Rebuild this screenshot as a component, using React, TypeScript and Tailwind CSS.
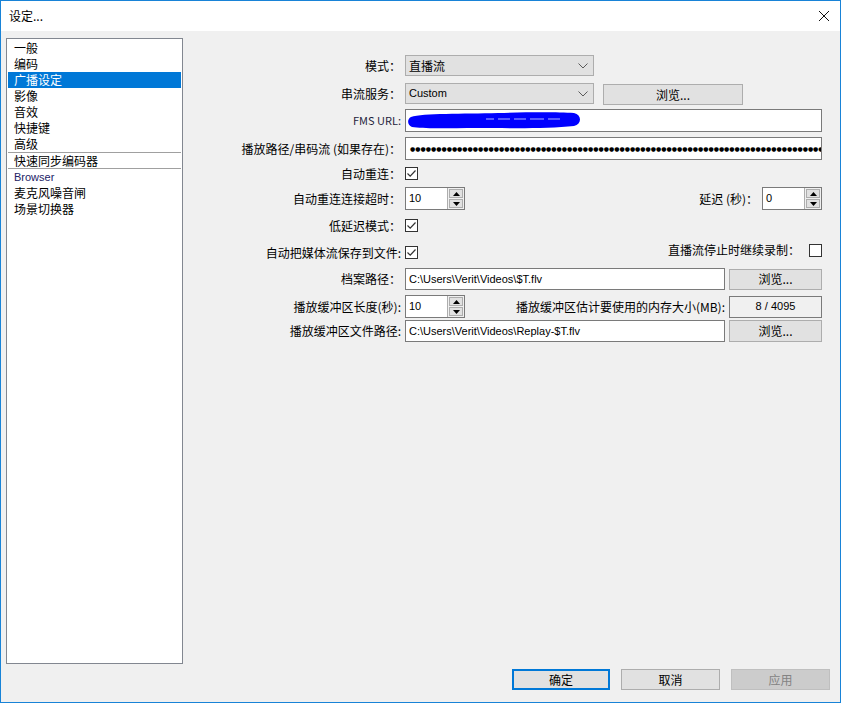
import React from 'react';

const font = { fontFamily: '"Noto Sans CJK SC", "Liberation Sans", sans-serif' };
const latin = { fontFamily: '"Liberation Sans", "Noto Sans CJK SC", sans-serif' };

const navItems = ['一般', '编码', '广播设定', '影像', '音效', '快捷键', '高级'];

const Check = ({ checked }: { checked: boolean }) => (
  <div className="w-[13px] h-[13px] shrink-0 border border-[#333333] bg-white flex items-center justify-center">
    {checked && (
      <svg width="11" height="11" viewBox="0 0 11 11">
        <path d="M1.5 5.5 L4.2 8.2 L9.5 2.5" fill="none" stroke="#333333" strokeWidth="1.2" />
      </svg>
    )}
  </div>
);

const Chevron = () => (
  <svg width="10" height="6" viewBox="0 0 10 6" className="mr-[5px]">
    <path d="M0.5 0.5 L5 5 L9.5 0.5" fill="none" stroke="#5a5a5a" strokeWidth="1" />
  </svg>
);

const Combo = ({ value, isLatin }: { value: string; isLatin?: boolean }) => (
  <div className="w-[189px] h-[21px] shrink-0 bg-[#e1e1e1] border border-[#adadad] flex items-center justify-between pl-[3px]">
    <span className={isLatin ? 'text-[11px] text-black' : 'text-[12px] text-black'} style={isLatin ? latin : font}>
      {value}
    </span>
    <Chevron />
  </div>
);

const Btn = ({ label, w, h = 'h-[21px]' }: { label: string; w: string; h?: string }) => (
  <div className={`${w} ${h} shrink-0 bg-[#e1e1e1] border border-[#adadad] flex items-center justify-center text-[12px] text-black`}>
    {label}
  </div>
);

const SpinBox = ({ value }: { value: string }) => (
  <div className="w-[60px] h-[23px] shrink-0 flex bg-white border border-[#7a7a7a]">
    <div className="flex-1 pl-[3px] pt-[3px] text-[11px] text-black leading-[14px]" style={latin}>
      {value}
    </div>
    <div className="w-[17px] flex flex-col gap-px p-px bg-[#f0f0f0] border-l border-[#adadad]">
      <div className="flex-1 bg-[#e1e1e1] border border-[#adadad] flex items-center justify-center">
        <svg width="7" height="4" viewBox="0 0 7 4">
          <path d="M0 4 L3.5 0 L7 4 Z" fill="#000" />
        </svg>
      </div>
      <div className="flex-1 bg-[#e1e1e1] border border-[#adadad] flex items-center justify-center">
        <svg width="7" height="4" viewBox="0 0 7 4">
          <path d="M0 0 L3.5 4 L7 0 Z" fill="#000" />
        </svg>
      </div>
    </div>
  </div>
);

const TextBox = ({ value, w }: { value: string; w: string }) => (
  <div className={`${w} h-[22px] shrink-0 bg-white border border-[#7a7a7a] flex items-center pl-[3px] text-[11px] text-black`} style={latin}>
    {value}
  </div>
);

const Row = ({ label, top, h, children, labelStyle }: { label: string; top: string; h: string; children: React.ReactNode; labelStyle?: string }) => (
  <div className={`flex items-center ${top} ${h}`}>
    <div className={`w-[222px] shrink-0 pr-[4px] text-right whitespace-nowrap ${labelStyle ?? 'text-[12px] text-black'}`}>{label}</div>
    {children}
  </div>
);

export default function App() {
  return (
    <div className="w-[841px] h-[703px] border border-[#1883d7] bg-[#f0f0f0] flex flex-col overflow-hidden" style={font}>
      {/* title bar */}
      <div className="h-[30px] shrink-0 bg-white flex items-center justify-between pl-[8px] pr-[10px]">
        <span className="text-[12px] text-black">设定...</span>
        <svg width="12" height="12" viewBox="0 0 12 12">
          <path d="M1 1 L11 11 M11 1 L1 11" stroke="#111" strokeWidth="1" />
        </svg>
      </div>

      <div className="flex-1 flex flex-col pl-[5px] pt-[7px]">
        <div className="flex h-[626px]">
          {/* nav list */}
          <div className="w-[177px] shrink-0 h-full border border-[#828790] bg-white pt-px px-px">
            {navItems.map((item) => (
              <div
                key={item}
                className={`h-[16px] flex items-center pl-[6px] text-[12px] whitespace-nowrap ${item === '广播设定' ? 'bg-[#0078d7] text-white' : 'text-black'}`}
              >
                {item}
              </div>
            ))}
            <div className="h-px bg-[#a0a0a0]" />
            <div className="h-[15px] flex items-center pl-[6px] text-[12px] text-black whitespace-nowrap">快速同步编码器</div>
            <div className="h-px bg-[#a0a0a0]" />
            <div className="h-[16px] flex items-center pl-[6px] text-[11px] text-[#222266]" style={latin}>
              Browser
            </div>
            <div className="h-[16px] flex items-center pl-[6px] text-[12px] text-black whitespace-nowrap">麦克风噪音闸</div>
            <div className="h-[16px] flex items-center pl-[6px] text-[12px] text-black whitespace-nowrap">场景切换器</div>
          </div>

          {/* settings */}
          <div className="flex-1 min-w-0 flex flex-col pt-[17px] pr-[18px]">
            <Row label="模式：" top="" h="h-[21px]">
              <Combo value="直播流" />
            </Row>
            <Row label="串流服务：" top="mt-[7px]" h="h-[21px]">
              <Combo value="Custom" isLatin />
              <div className="ml-[9px] mt-[2px]">
                <Btn label="浏览..." w="w-[140px]" />
              </div>
            </Row>
            <Row label="FMS URL:" top="mt-[5px]" h="h-[23px]" labelStyle="text-[11px] text-[#1e1e3c]">
              <div className="flex-1 min-w-0 h-[23px] bg-white border border-[#7a7a7a] flex items-center pl-[2px]">
                <svg width="174" height="19" viewBox="0 0 174 19">
                  <path
                    d="M3 6 C15 2 55 3 90 2 C122 1 150 1 166 2 C174 4 174 13 166 15 C140 18 100 17 70 17 C40 17 15 18 4 16 C-1 14 -1 8 3 6 Z"
                    fill="#0000ff"
                  />
                  <path d="M78 8 L86 8 M90 8 L102 8 M106 8 L118 8 M122 8 L136 8 M140 8 L152 8" stroke="#b0b4ff" strokeWidth="1" />
                </svg>
              </div>
            </Row>
            <Row label="播放路径/串码流 (如果存在)：" top="mt-[5px]" h="h-[23px]">
              <div className="flex-1 min-w-0 h-[23px] bg-white border border-[#7a7a7a] flex items-center pl-[4px] overflow-hidden">
                <span className="whitespace-nowrap text-[6px] leading-[8px] text-black tracking-[0px]" style={{ fontFamily: '"DejaVu Sans", sans-serif' }}>
                  {'●'.repeat(82)}
                </span>
              </div>
            </Row>
            <Row label="自动重连：" top="mt-[3px]" h="h-[21px]">
              <Check checked />
            </Row>
            <Row label="自动重连连接超时：" top="mt-[3px]" h="h-[23px]">
              <SpinBox value="10" />
              <div className="ml-auto flex items-center">
                <span className="text-[12px] text-black mr-[4px] whitespace-nowrap">延迟 (秒)：</span>
                <SpinBox value="0" />
              </div>
            </Row>
            <Row label="低延迟模式：" top="mt-[5px]" h="h-[21px]">
              <Check checked />
            </Row>
            <Row label="自动把媒体流保存到文件:" top="mt-[6px]" h="h-[21px]">
              <Check checked />
              <div className="ml-auto flex items-center -mt-[5px]">
                <span className="text-[12px] text-black mr-[9px] whitespace-nowrap">直播流停止时继续录制：</span>
                <Check checked={false} />
              </div>
            </Row>
            <Row label="档案路径：" top="mt-[5px]" h="h-[22px]">
              <TextBox value="C:\Users\Verit\Videos\$T.flv" w="w-[320px]" />
              <div className="ml-[4px]">
                <Btn label="浏览..." w="w-[93px]" />
              </div>
            </Row>
            <Row label="播放缓冲区长度(秒):" top="mt-[5px]" h="h-[23px]">
              <SpinBox value="10" />
              <span className="flex-1 min-w-0 text-right text-[12px] text-black pr-[4px] whitespace-nowrap">播放缓冲区估计要使用的内存大小(MB):</span>
              <div className="w-[93px] h-[22px] shrink-0 border border-[#7a7a7a] bg-[#f0f0f0] flex items-center justify-center text-[11px] text-black" style={latin}>
                8 / 4095
              </div>
            </Row>
            <Row label="播放缓冲区文件路径:" top="mt-[2px]" h="h-[22px]">
              <TextBox value="C:\Users\Verit\Videos\Replay-$T.flv" w="w-[320px]" />
              <div className="ml-[4px]">
                <Btn label="浏览..." w="w-[93px]" h="h-[22px]" />
              </div>
            </Row>
          </div>
        </div>

        {/* bottom buttons */}
        <div className="flex justify-end gap-[11px] mt-[5px] pr-[10px]">
          <div className="w-[98px] h-[21px] bg-[#e1e1e1] border-2 border-[#0078d7] flex items-center justify-center text-[12px] text-black">
            确定
          </div>
          <Btn label="取消" w="w-[99px]" />
          <div className="w-[99px] h-[21px] bg-[#cccccc] border border-[#bfbfbf] flex items-center justify-center text-[12px] text-[#838383]">
            应用
          </div>
        </div>
      </div>
    </div>
  );
}
